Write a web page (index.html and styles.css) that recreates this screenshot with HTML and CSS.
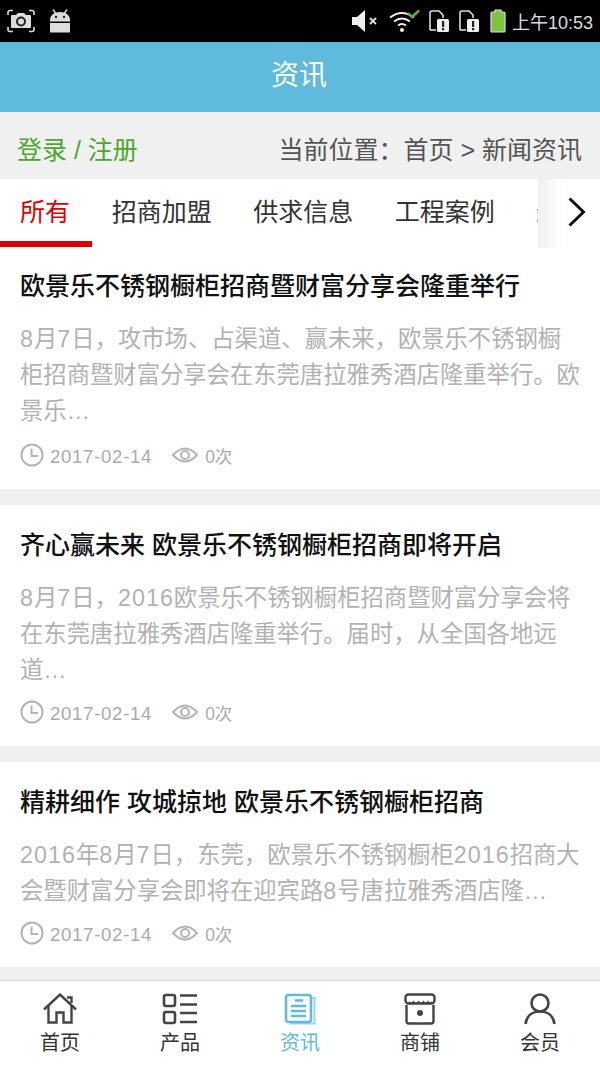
FILE: index.html
```html
<!DOCTYPE html>
<html lang="zh-CN">
<head>
<meta charset="utf-8">
<title>资讯</title>
<link rel="stylesheet" href="styles.css">
</head>
<body>
<div class="app">
  <div class="status">
    <svg class="st-cam" width="28" height="24" viewBox="0 0 28 24"><g fill="none" stroke="#ddd" stroke-width="1.6"><path d="M1 6V3.500Q1 1.500 3 1.500H6M22 1.500H25Q27 1.500 27 3.500V6M1 18V20.500Q1 22.500 3 22.500H6M22 22.500H25Q27 22.500 27 20.500V18"/></g><path d="M5 6H9L11 4H17L19 6H23Q24 6 24 7V18Q24 19 23 19H5Q4 19 4 18V7Q4 6 5 6Z" fill="#ddd"/><circle cx="14" cy="12.500" r="4" fill="none" stroke="#222" stroke-width="2"/></svg>
    <svg class="st-droid" width="22" height="24" viewBox="0 0 22 24"><path d="M1 11.500C1 6 5 3 11 3S21 6 21 11.500V12.500H1Z" fill="#ddd"/><path d="M4 0.500L6.500 4M18 0.500L15.500 4" stroke="#ddd" stroke-width="1.400"/><circle cx="7" cy="8" r="1.200" fill="#222"/><circle cx="15" cy="8" r="1.200" fill="#222"/><path d="M1 14H21V23.500H1Z" fill="#ddd"/></svg>
    <div class="st-right">
      <svg width="26" height="24" viewBox="0 0 26 24"><path d="M0 8H5L13 1V23L5 16H0Z" fill="#eee"/><path d="M18 9L24 15M24 9L18 15" stroke="#ddd" stroke-width="1.800"/></svg>
      <svg class="st-wifi" width="32" height="24" viewBox="0 0 32 24"><g fill="none" stroke="#eee" stroke-width="2"><path d="M1 8.500Q13 -0.500 25 8.500"/><path d="M5 12.500Q13 6.500 21 12.500"/><path d="M9 16.500Q13 13.500 17 16.500"/></g><circle cx="13" cy="21" r="2" fill="#eee"/><path d="M19 4L23 8L30 1.500" fill="none" stroke="#5cb531" stroke-width="2.400"/></svg>
      <svg class="st-sim" width="22" height="24" viewBox="0 0 22 24"><path d="M2 21V4Q2 2 4 2H11L15 6V9" fill="none" stroke="#ddd" stroke-width="1.600"/><path d="M2 21H8" stroke="#ddd" stroke-width="1.600"/><rect x="9" y="10" width="12" height="13" rx="1.500" fill="#eee"/><rect x="14" y="12" width="2.200" height="6" fill="#222"/><rect x="14" y="19" width="2.200" height="2.200" fill="#222"/></svg>
      <svg class="st-sim2" width="22" height="24" viewBox="0 0 22 24"><path d="M2 21V4Q2 2 4 2H11L15 6V9" fill="none" stroke="#ddd" stroke-width="1.600"/><path d="M2 21H8" stroke="#ddd" stroke-width="1.600"/><rect x="9" y="10" width="12" height="13" rx="1.500" fill="#eee"/><rect x="14" y="12" width="2.200" height="6" fill="#222"/><rect x="14" y="19" width="2.200" height="2.200" fill="#222"/></svg>
      <svg class="st-bat" width="16" height="24" viewBox="0 0 16 24"><path d="M5 1H11V3H14Q15 3 15 4V22Q15 23 14 23H2Q1 23 1 22V4Q1 3 2 3H5Z" fill="#7fc242" stroke="#ddd" stroke-width="1.200"/></svg>
      <span class="st-time">上午10:53</span>
    </div>
  </div>

  <header class="head">资讯</header>

  <div class="crumbs">
    <div class="login">登录 / 注册</div>
    <div class="where">当前位置：首页 &gt; 新闻资讯</div>
  </div>

  <nav class="tabs">
    <div class="tab-scroll">
      <div class="tab tab-on">所有</div>
      <div class="tab">招商加盟</div>
      <div class="tab">供求信息</div>
      <div class="tab">工程案例</div>
      <div class="tab">最新动态</div>
    </div>
    <div class="tab-more">
      <svg width="20" height="30" viewBox="0 0 20 30"><path d="M2.500 1.500L16.500 15L2.500 28.500" fill="none" stroke="#111" stroke-width="3"/></svg>
    </div>
  </nav>

  <main class="list">
    <article class="card">
      <h2 class="title">欧景乐不锈钢橱柜招商暨财富分享会隆重举行</h2>
      <p class="desc"><span class="num">8</span>月<span class="num">7</span>日，攻市场、占渠道、赢未来，欧景乐不锈钢橱柜招商暨财富分享会在东莞唐拉雅秀酒店隆重举行。欧景乐…</p>
      <div class="meta">
        <svg width="24" height="24" viewBox="0 0 24 24"><circle cx="12" cy="12" r="10.500" fill="none" stroke="#b4b4b4" stroke-width="2"/><path d="M11.500 5.500V13H18" fill="none" stroke="#b4b4b4" stroke-width="2"/></svg>
        <span class="date">2017-02-14</span>
        <svg class="ic-eye" width="26" height="20" viewBox="0 0 26 20"><path d="M1 10Q13 -3 25 10Q13 23 1 10Z" fill="none" stroke="#b4b4b4" stroke-width="2"/><circle cx="13" cy="10" r="4" fill="none" stroke="#b4b4b4" stroke-width="2"/></svg>
        <span class="views">0次</span>
      </div>
    </article>
    <article class="card">
      <h2 class="title">齐心赢未来 欧景乐不锈钢橱柜招商即将开启</h2>
      <p class="desc"><span class="num">8</span>月<span class="num">7</span>日，<span class="num">2016</span>欧景乐不锈钢橱柜招商暨财富分享会将在东莞唐拉雅秀酒店隆重举行。届时，从全国各地远道…</p>
      <div class="meta">
        <svg width="24" height="24" viewBox="0 0 24 24"><circle cx="12" cy="12" r="10.500" fill="none" stroke="#b4b4b4" stroke-width="2"/><path d="M11.500 5.500V13H18" fill="none" stroke="#b4b4b4" stroke-width="2"/></svg>
        <span class="date">2017-02-14</span>
        <svg class="ic-eye" width="26" height="20" viewBox="0 0 26 20"><path d="M1 10Q13 -3 25 10Q13 23 1 10Z" fill="none" stroke="#b4b4b4" stroke-width="2"/><circle cx="13" cy="10" r="4" fill="none" stroke="#b4b4b4" stroke-width="2"/></svg>
        <span class="views">0次</span>
      </div>
    </article>
    <article class="card">
      <h2 class="title">精耕细作 攻城掠地 欧景乐不锈钢橱柜招商</h2>
      <p class="desc"><span class="num">2016</span>年<span class="num">8</span>月<span class="num">7</span>日，东莞，欧景乐不锈钢橱柜<span class="num">2016</span>招商大会暨财富分享会即将在迎宾路<span class="num">8</span>号唐拉雅秀酒店隆…</p>
      <div class="meta">
        <svg width="24" height="24" viewBox="0 0 24 24"><circle cx="12" cy="12" r="10.500" fill="none" stroke="#b4b4b4" stroke-width="2"/><path d="M11.500 5.500V13H18" fill="none" stroke="#b4b4b4" stroke-width="2"/></svg>
        <span class="date">2017-02-14</span>
        <svg class="ic-eye" width="26" height="20" viewBox="0 0 26 20"><path d="M1 10Q13 -3 25 10Q13 23 1 10Z" fill="none" stroke="#b4b4b4" stroke-width="2"/><circle cx="13" cy="10" r="4" fill="none" stroke="#b4b4b4" stroke-width="2"/></svg>
        <span class="views">0次</span>
      </div>
    </article>
  </main>

  <footer class="bar">
    <div class="bar-item">
      <svg width="34" height="32" viewBox="0 0 34 32"><g fill="none" stroke="#444" stroke-width="2.400"><path d="M1 16.500L17 1.500L33 16.500"/><path d="M5.500 13V29.500H13.500V19.500H20.500V29.500H28.500V13"/><path d="M24 4.500H28.500V10"/></g></svg>
      <span>首页</span>
    </div>
    <div class="bar-item">
      <svg width="36" height="32" viewBox="0 0 36 32"><g fill="none" stroke="#444" stroke-width="2.600"><rect x="2" y="2" width="11" height="11" rx="2"/><rect x="2" y="19" width="11" height="11" rx="2"/></g><path d="M18 2.500H35M18 11.500H35M18 20H35M18 29H35" stroke="#444" stroke-width="2.400"/></svg>
      <span>产品</span>
    </div>
    <div class="bar-item bar-on">
      <svg width="32" height="32" viewBox="0 0 32 32"><path d="M28 5H30.500V30.500H6" fill="none" stroke="#9ed5e9" stroke-width="2"/><rect x="2" y="2" width="25" height="27" rx="2.500" fill="#fff" stroke="#5fbadb" stroke-width="2.600"/><path d="M11 7.500H19" stroke="#5fbadb" stroke-width="2.600"/><path d="M7 13H22M7 18H22M7 23H22" stroke="#5fbadb" stroke-width="2.600"/></svg>
      <span>资讯</span>
    </div>
    <div class="bar-item">
      <svg width="32" height="32" viewBox="0 0 32 32"><g fill="none" stroke="#444" stroke-width="2.400"><rect x="1.500" y="1.500" width="29" height="9" rx="3"/><path d="M2.500 12V28Q2.500 30.500 5 30.500H27Q29.500 30.500 29.500 28V12"/></g><path d="M5 9Q7 12 9.500 9Q12 12 14.500 9Q17 12 19.500 9Q22 12 24 9Q26 12 28 9" fill="none" stroke="#444" stroke-width="1.800"/><circle cx="16" cy="20" r="3" fill="#444"/></svg>
      <span>商铺</span>
    </div>
    <div class="bar-item">
      <svg width="32" height="32" viewBox="0 0 32 32"><g fill="none" stroke="#444" stroke-width="2.600"><circle cx="16" cy="10" r="8.500"/><path d="M1.500 31C2.500 23 8 18.500 16 18.500S29.500 23 30.500 31"/></g></svg>
      <span>会员</span>
    </div>
  </footer>
</div>
</body>
</html>
```

FILE: styles.css
```css
* { box-sizing: border-box; }
html, body { margin: 0; padding: 0; }
body {
  font-family: "Liberation Sans", "Noto Sans CJK SC", sans-serif;
  background: #f0f0f0;
}
.app {
  width: 600px;
  height: 1067px;
  overflow: hidden;
  display: flex;
  flex-direction: column;
}
.status {
  height: 42px;
  flex: none;
  background: #000;
  display: flex;
  align-items: center;
  padding: 0 7px;
}
.st-droid { margin-left: 14px; }
.st-right {
  margin-left: auto;
  display: flex;
  align-items: center;
}
.st-wifi { margin-left: 11px; }
.st-sim { margin-left: 7px; }
.st-sim2 { margin-left: 8px; }
.st-bat { margin-left: 10px; }
.st-time {
  color: #ddd;
  font-size: 18px;
  margin-left: 6px;
}
.head {
  height: 70px;
  flex: none;
  background: #5fbadb;
  color: #fff;
  font-size: 28px;
  display: flex;
  align-items: center;
  justify-content: center;
  padding: 0 2px 8px 0;
}
.crumbs {
  height: 67px;
  flex: none;
  display: flex;
  align-items: center;
  justify-content: space-between;
  padding: 4px 18px 0 17px;
  font-size: 25px;
}
.login { color: #4aa82e; }
.where { color: #555; }
.tabs {
  height: 69px;
  flex: none;
  background: #fff;
  display: flex;
}
.tab-scroll {
  width: 538px;
  flex: none;
  display: flex;
  overflow: hidden;
}
.tab {
  flex: none;
  padding: 0 20.750px;
  font-size: 25px;
  color: #333;
  display: flex;
  align-items: center;
  border-bottom: 6px solid transparent;
  height: 68px;
}
.tab-on {
  width: 92px;
  margin-right: -1px;
  padding: 0 20px;
  color: #dc0000;
  border-bottom-color: #dc0000;
}
.tab-more {
  flex: 1;
  display: flex;
  align-items: center;
  justify-content: flex-end;
  padding: 0 13px 3px 0;
  background: linear-gradient(to right, #f0f0f0 0, #ffffff 26px);
}
.list { flex: 1; overflow: hidden; }
.card {
  background: #fff;
  padding: 22px 20px 0;
  height: 241px;
  margin-bottom: 16px;
}
.card:first-child { padding-top: 20px; }
.card:last-child { height: 205px; margin-bottom: 0; }
.title {
  margin: 0;
  font-size: 25px;
  line-height: 36px;
  font-weight: 500;
  color: #111;
}
.desc {
  margin: 17px 0 0;
  font-size: 23.330px;
  line-height: 36px;
  color: #b2b2b2;
}
.num { letter-spacing: 1px; }
.meta {
  margin-top: 14px;
  display: flex;
  align-items: center;
  font-size: 18.600px;
  color: #aaa;
  height: 24px;
}
.card:nth-child(2) .meta { margin-top: 12px; }
.card:nth-child(3) .meta { margin-top: 12px; }
.date { margin-left: 6px; padding-top: 3px; letter-spacing: 0.700px; }
.views { font-size: 17.500px; }
.ic-eye { margin: 0 7px 0 20px; }
.bar {
  height: 87px;
  margin-top: 13px;
  flex: none;
  background: #fff;
  border-top: 1px solid #d4d4d4;
  display: flex;
}
.bar-item {
  flex: 1;
  display: flex;
  flex-direction: column;
  align-items: center;
  padding-top: 12px;
  font-size: 20px;
  color: #333;
}
.bar-item span { line-height: 30px; margin-top: 3px; }
.bar-on { color: #5fbadb; }
```
